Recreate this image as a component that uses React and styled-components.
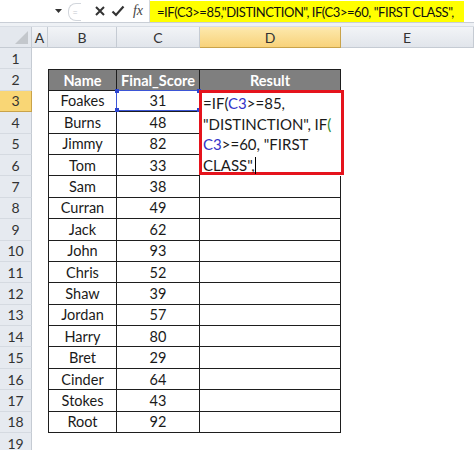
import React from 'react';
import styled, { createGlobalStyle } from 'styled-components';

const GlobalStyle = createGlobalStyle`
  body {
    margin: 0;
    background: #fff;
    font-family: Lato, "Liberation Sans", sans-serif;
    overflow: hidden;
  }
`;

const Page = styled.div`
  width: 474px;
  height: 450px;
  overflow: hidden;
  background: #fff;
`;

const FormulaBar = styled.div`
  display: flex;
  align-items: stretch;
  height: 22px;
  background: #fff;
  border-bottom: 1px solid #c9ced6;
`;

const NameBox = styled.div`
  width: 66px;
  display: flex;
  align-items: center;
  justify-content: flex-end;
  padding-right: 4px;
  box-sizing: border-box;
`;

const Grip = styled.div`
  width: 12px;
  height: 16px;
  margin: 3px 10px 0 2px;
  border: 1px solid #d2d6dc;
  border-radius: 8px 0 0 8px;
  border-right: none;
  display: flex;
  align-items: center;
  justify-content: center;
  color: #c4c8cf;
  font-size: 9px;
`;

const IconButton = styled.div`
  width: 18px;
  display: flex;
  align-items: center;
  justify-content: center;
`;

const Fx = styled.div`
  width: 22px;
  display: flex;
  align-items: center;
  justify-content: center;
  font-family: "Liberation Serif", serif;
  font-style: italic;
  font-size: 14px;
  color: #444;
  border-right: 1px solid #d4d8de;
`;

const FormulaText = styled.div`
  width: 314px;
  margin-top: 1px;
  background: #ffff00;
  display: flex;
  align-items: center;
  padding-left: 7px;
  box-sizing: border-box;
  font-size: 13px;
  letter-spacing: -0.45px;
  color: #111;
  white-space: nowrap;
  overflow: hidden;
`;

const Strip = styled.div`
  height: 3px;
  background: #eef1f5;
  border-bottom: 1px solid #d8dde4;
`;

const Sheet = styled.div`
  display: grid;
  grid-template-columns: 32px 16px 69px 83px 141px 1fr;
  grid-template-rows: 21px repeat(19, 21.4px);
  font-size: 14.5px;
  color: #1a1a1a;
`;

const Corner = styled.div`
  grid-column: 1;
  grid-row: 1;
  position: relative;
  background: #e4e8ee;
  border-right: 1px solid #c5cbd3;
  border-bottom: 1px solid #c5cbd3;
  &::after {
    content: '';
    position: absolute;
    right: 3px;
    bottom: 3px;
    border-left: 13px solid transparent;
    border-bottom: 13px solid #c3c7cc;
  }
`;

const ColHead = styled.div`
  grid-column: ${(p) => p.$col};
  grid-row: 1;
  display: flex;
  align-items: center;
  justify-content: center;
  box-sizing: border-box;
  border-right: 1px solid ${(p) => (p.$active ? '#c9a34a' : '#c5cbd3')};
  border-bottom: 1px solid ${(p) => (p.$active ? '#c9a34a' : '#c5cbd3')};
  background: ${(p) =>
    p.$active
      ? 'linear-gradient(#fde9ae, #f8d27a)'
      : 'linear-gradient(#f2f4f7, #e1e5eb)'};
  color: #333;
  font-size: 14px;
`;

const RowHead = styled.div`
  grid-column: 1;
  grid-row: ${(p) => p.$row};
  display: flex;
  align-items: center;
  justify-content: center;
  box-sizing: border-box;
  border-right: 1px solid ${(p) => (p.$active ? '#c9a34a' : '#c5cbd3')};
  border-bottom: 1px solid ${(p) => (p.$active ? '#c9a34a' : '#d5dae1')};
  background: ${(p) => (p.$active ? '#f9d675' : '#e6eaf0')};
  color: #333;
  font-size: 14px;
`;

const Cell = styled.div`
  grid-column: ${(p) => p.$col};
  grid-row: ${(p) => p.$row};
  display: flex;
  align-items: center;
  justify-content: center;
  box-sizing: border-box;
  position: relative;
  border-right: 1px solid #1e1e1e;
  border-bottom: 1px solid #1e1e1e;
  border-left: ${(p) => (p.$first ? '1px solid #1e1e1e' : 'none')};
  border-top: ${(p) => (p.$top ? '1px solid #1e1e1e' : 'none')};
  background: ${(p) => (p.$head ? '#7f7f7f' : '#fff')};
  color: ${(p) => (p.$head ? '#fff' : '#1a1a1a')};
  font-weight: ${(p) => (p.$head ? 700 : 400)};
`;

const Selected = styled.div`
  position: absolute;
  inset: -1px -1px 0 -1px;
  border: 1px solid #3b55d6;
`;

const Handle = styled.span`
  position: absolute;
  width: 4px;
  height: 4px;
  background: #2b44d0;
  ${(p) => (p.$top ? 'top: -2px;' : 'bottom: -2px;')}
  ${(p) => (p.$left ? 'left: -2px;' : 'right: -2px;')}
`;

const Editor = styled.div`
  grid-column: 5;
  grid-row: 4 / span 4;
  margin: -1px -3px 1px -1px;
  border: 3px solid #e5131c;
  background: #fff;
  position: relative;
  z-index: 2;
  padding: 0 0 0 1px;
  font-size: 15px;
  line-height: 20.8px;
  white-space: nowrap;
  color: #1a1a1a;
`;

const Ref = styled.span`
  color: ${(p) => (p.$green ? '#2d8a2d' : '#3434c8')};
`;

const Caret = styled.span`
  display: inline-block;
  width: 1px;
  height: 17px;
  background: #000;
  vertical-align: -3px;
`;

const people = [
  ['Foakes', 31],
  ['Burns', 48],
  ['Jimmy', 82],
  ['Tom', 33],
  ['Sam', 38],
  ['Curran', 49],
  ['Jack', 62],
  ['John', 93],
  ['Chris', 52],
  ['Shaw', 39],
  ['Jordan', 57],
  ['Harry', 80],
  ['Bret', 29],
  ['Cinder', 64],
  ['Stokes', 43],
  ['Root', 92],
];

const Cross = () => (
  <svg width="12" height="12" viewBox="0 0 12 12">
    <path d="M2 2 L10 10 M10 2 L2 10" stroke="#333" strokeWidth="2" />
  </svg>
);

const Tick = () => (
  <svg width="14" height="12" viewBox="0 0 14 12">
    <path d="M1.5 6.5 L5 10 L12.5 1.5" stroke="#333" strokeWidth="2.2" fill="none" />
  </svg>
);

const DropArrow = () => (
  <svg width="7" height="4" viewBox="0 0 7 4">
    <path d="M0 0 H7 L3.5 4 Z" fill="#333" />
  </svg>
);

const App = () => {
  const cols = ['A', 'B', 'C', 'D', 'E'];

  return (
    <Page>
      <GlobalStyle />
      <FormulaBar>
        <NameBox>
          <DropArrow />
        </NameBox>
        <Grip>=</Grip>
        <IconButton>
          <Cross />
        </IconButton>
        <IconButton>
          <Tick />
        </IconButton>
        <Fx>fx</Fx>
        <FormulaText>=IF(C3&gt;=85,"DISTINCTION", IF(C3&gt;=60, "FIRST CLASS",</FormulaText>
      </FormulaBar>
      <Strip />
      <Sheet>
        <Corner />
        {cols.map((c, i) => (
          <ColHead key={c} $col={i + 2} $active={c === 'D'}>
            {c}
          </ColHead>
        ))}
        {Array.from({ length: 19 }, (_, i) => (
          <RowHead key={i} $row={i + 2} $active={i + 1 === 3}>
            {i + 1}
          </RowHead>
        ))}

        <Cell $row={3} $col={3} $head $first $top>Name</Cell>
        <Cell $row={3} $col={4} $head $top>Final_Score</Cell>
        <Cell $row={3} $col={5} $head $top>Result</Cell>

        {people.map(([name, score], i) => {
          const row = i + 4;
          return (
            <React.Fragment key={name}>
              <Cell $row={row} $col={3} $first>{name}</Cell>
              <Cell $row={row} $col={4}>
                {score}
                {i === 0 && (
                  <Selected>
                    <Handle $top $left />
                    <Handle $left />
                    <Handle $top />
                    <Handle />
                  </Selected>
                )}
              </Cell>
              {i > 3 && <Cell $row={row} $col={5} />}
            </React.Fragment>
          );
        })}

        <Editor>
          =IF(<Ref>C3</Ref>&gt;=85,
          <br />
          "DISTINCTION", IF<Ref $green>(</Ref>
          <br />
          <Ref>C3</Ref>&gt;=60, "FIRST
          <br />
          CLASS",<Caret />
        </Editor>
      </Sheet>
    </Page>
  );
};

export default App;
